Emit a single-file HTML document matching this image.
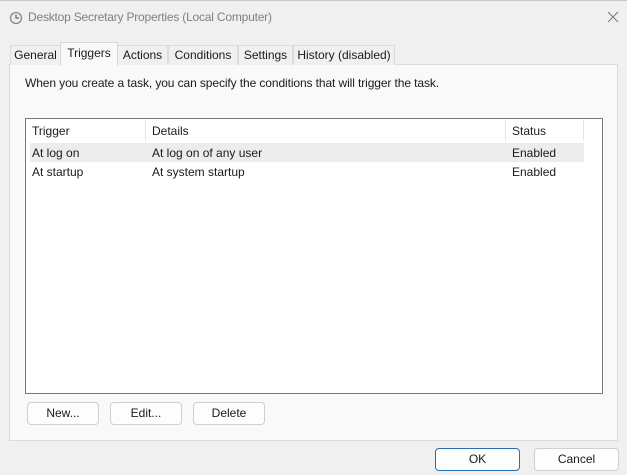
<!DOCTYPE html>
<html><head><style>
*{margin:0;padding:0;box-sizing:border-box}
body{width:627px;height:475px;background:#f0f0f0;font-family:"Liberation Sans",sans-serif;font-size:12px;color:#1a1a1a;position:relative;overflow:hidden}
.a{position:absolute;white-space:nowrap}
.tab{position:absolute;top:45px;height:20px;border:1px solid #dcdcdc;border-bottom:none;background:#f0f0f0;text-align:center;line-height:18px}
.btn{position:absolute;height:23px;border:1px solid #cfcfcf;border-radius:4px;background:#fdfdfd;text-align:center;line-height:21px}
</style></head><body>
<div class="a" style="left:0;top:0;width:627px;height:1px;background:#c8c8c8"></div>
<svg class="a" style="left:9px;top:11px" width="14" height="14"><circle cx="7" cy="7" r="5.5" fill="#eee" stroke="#888" stroke-width="1.3"/><path d="M7 3.5V7h3" stroke="#666" fill="none" stroke-width="1.2"/></svg>
<div class="a" style="left:28px;top:10px;color:#808080;letter-spacing:-0.2px">Desktop Secretary Properties (Local Computer)</div>
<svg class="a" style="left:607px;top:11px" width="12" height="12"><path d="M1 1L11 11M11 1L1 11" stroke="#777" stroke-width="1"/></svg>
<div class="a" style="left:9px;top:64px;width:609px;height:377px;background:#f9f9f9;border:1px solid #dcdcdc"></div>
<div class="tab" style="left:10px;width:51px">General</div>
<div class="tab" style="left:117px;width:51px">Actions</div>
<div class="tab" style="left:168px;width:70px">Conditions</div>
<div class="tab" style="left:238px;width:55px">Settings</div>
<div class="tab" style="left:293px;width:102px">History (disabled)</div>
<div class="tab" style="left:60px;top:42px;width:58px;height:24px;background:#f9f9f9;border-color:#d8d8d8;line-height:20px">Triggers</div>
<div class="a" style="left:25px;top:76px;letter-spacing:-0.1px">When you create a task, you can specify the conditions that will trigger the task.</div>
<div class="a" style="left:25px;top:118px;width:578px;height:276px;background:#fff;border:1px solid #7a7a7a"></div>
<div class="a" style="left:145px;top:120px;width:1px;height:21px;background:#e5e5e5"></div>
<div class="a" style="left:505px;top:120px;width:1px;height:21px;background:#e5e5e5"></div>
<div class="a" style="left:583px;top:120px;width:1px;height:21px;background:#e5e5e5"></div>
<div class="a" style="left:30px;top:143px;width:554px;height:19px;background:#ececec"></div>
<div class="a" style="left:32px;top:124px">Trigger</div>
<div class="a" style="left:152px;top:124px">Details</div>
<div class="a" style="left:512px;top:124px">Status</div>
<div class="a" style="left:32px;top:146px">At log on</div>
<div class="a" style="left:152px;top:146px">At log on of any user</div>
<div class="a" style="left:512px;top:146px">Enabled</div>
<div class="a" style="left:32px;top:165px">At startup</div>
<div class="a" style="left:152px;top:165px">At system startup</div>
<div class="a" style="left:512px;top:165px">Enabled</div>
<div class="btn" style="left:27px;top:402px;width:72px">New...</div>
<div class="btn" style="left:110px;top:402px;width:72px">Edit...</div>
<div class="btn" style="left:193px;top:402px;width:72px">Delete</div>
<div class="btn" style="left:435px;top:448px;width:85px;border:1px solid #2a6fb0">OK</div>
<div class="btn" style="left:534px;top:448px;width:85px">Cancel</div>
</body></html>
